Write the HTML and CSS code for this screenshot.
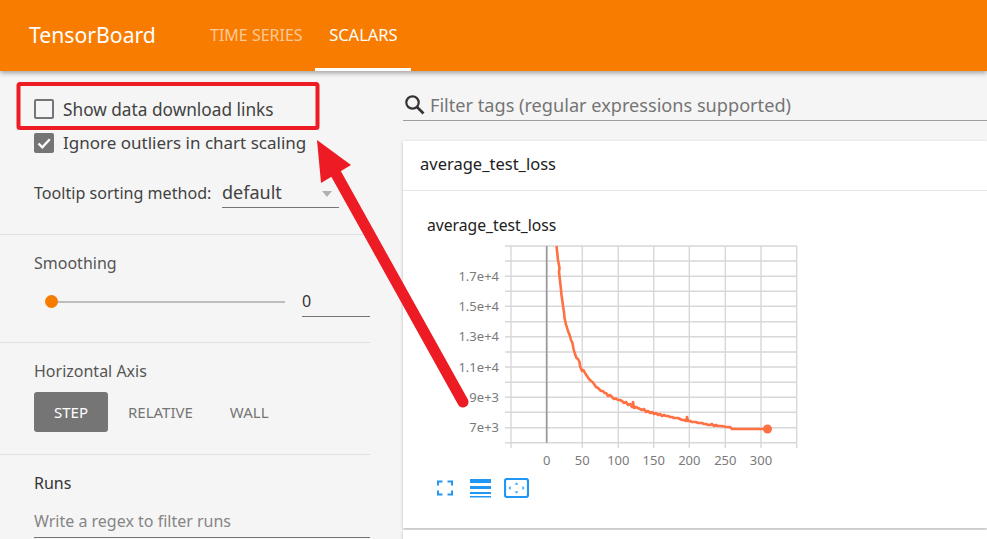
FILE: index.html
```html
<!DOCTYPE html>
<html lang="en">
<head>
<meta charset="utf-8">
<title>TensorBoard</title>
<link rel="stylesheet" href="styles.css">
</head>
<body>
<header class="topbar">
  <div class="brand">TensorBoard</div>
  <nav class="tabs">
    <a class="tab">TIME SERIES</a>
    <a class="tab tab-active">SCALARS</a>
  </nav>
</header>
<main class="layout">
  <aside class="sidebar">
    <section class="group group-options">
      <label class="check-row"><span class="box"></span><span>Show data download links</span></label>
      <label class="check-row check-row-second">
        <span class="box box-on"><svg viewBox="0 0 20 20" width="20" height="20"><path d="M4.500 10.500l3.800 3.800 7.500-8" fill="none" stroke="#fff" stroke-width="2.400"/></svg></span>
        <span>Ignore outliers in chart scaling</span>
      </label>
      <div class="sort-row">
        <span class="sort-label">Tooltip sorting method:</span>
        <div class="select"><span>default</span><i class="caret"></i></div>
      </div>
    </section>
    <section class="group group-smooth">
      <h3 class="group-title">Smoothing</h3>
      <div class="slider-row">
        <div class="slider"><span class="thumb"></span></div>
        <div class="num">0</div>
      </div>
    </section>
    <section class="group group-axis">
      <h3 class="group-title">Horizontal Axis</h3>
      <div class="axis-buttons">
        <button class="axis-btn axis-on">STEP</button>
        <button class="axis-btn axis-rel">RELATIVE</button>
        <button class="axis-btn axis-wall">WALL</button>
      </div>
    </section>
    <section class="group group-runs">
      <h3 class="group-title runs-title">Runs</h3>
      <div class="regex">Write a regex to filter runs</div>
    </section>
  </aside>
  <div class="content">
    <div class="filter">
      <svg class="search" viewBox="0 0 24 24" width="24" height="24"><circle cx="9.500" cy="9.500" r="6.200" fill="none" stroke="#333" stroke-width="2.200"/><path d="M14 14l6.500 6.500" stroke="#333" stroke-width="2.600" fill="none"/></svg>
      <span>Filter tags (regular expressions supported)</span>
    </div>
    <div class="card">
      <div class="card-head">average_test_loss</div>
      <div class="card-body">
        <div class="chart-title">average_test_loss</div>
        <svg class="chart" viewBox="450 240 360 228" width="360" height="228">
          <g class="grid">
            <path d="M505 246H797M505 261H797M505 276.300H797M505 291.300H797M505 306.300H797M505 321.700H797M505 336.700H797M505 352H797M505 367H797M505 382.300H797M505 397.300H797M505 412.300H797M505 427.700H797M505 442.700H797"/>
            <path d="M511 246V448M582.300 246V448M618.300 246V448M653.700 246V448M689.300 246V448M725.300 246V448M761 246V448M796.700 246V448"/>
          </g>
          <path class="zero" d="M546.700 246V442.700"/>
          <g class="ylabels">
            <text x="499" y="281">1.7e+4</text>
            <text x="499" y="311">1.5e+4</text>
            <text x="499" y="341">1.3e+4</text>
            <text x="499" y="371.500">1.1e+4</text>
            <text x="499" y="402">9e+3</text>
            <text x="499" y="432">7e+3</text>
          </g>
          <g class="xlabels">
            <text x="546.700" y="465">0</text>
            <text x="582.300" y="465">50</text>
            <text x="618.300" y="465">100</text>
            <text x="653.700" y="465">150</text>
            <text x="689.300" y="465">200</text>
            <text x="725.300" y="465">250</text>
            <text x="761" y="465">300</text>
          </g>
          <polyline class="curve" points="556.500,246 558,260 559.500,268 559,272 560.500,285 561.500,295 562.500,302 563,306 564,312 564.500,318 565.500,322 566,325 566.500,326 568,331 570,336 571,340 572.500,343 573.500,349 575,354 576.500,358 578,359 579.500,362 580,366 582,371 583.500,370 585,373 587,376 589,379 591,381 592.500,382 594,384 596,387 598,388 600,390 601,391 603,391 604.500,393 606,393 608,396 610,395 612,397 614,399 616,398.500 618,400 620,400 622,401 624,403 626,402 628,405 630,404 632,407 633,402 634,408 636,407 638,408 640,409 642,410 644,409 646,412 648,411 650,413 652,412 654,414 656,413 658,415 660,414 662,416 664,415 666,416 668,416 670,417 672,417 674,418 676,418 678,418 680,419 682,420 684,420 686,421 687,417 688,421 690,421 692,422 694,422 696,422 698,423 700,423 702,423 704,424 706,424 708,425 710,425 712,424 714,426 716,425 718,426 720,426 722,426 724,426.500 726,427 728,427 730,427 732,429 734,429 740,429 750,429 760,429 767,429"/>
          <circle class="dot" cx="767.500" cy="429" r="4.500"/>
        </svg>
        <div class="tools">
          <svg class="tool tool-full" viewBox="0 0 16 16" width="16" height="16"><path d="M1 5.500V1.500H5.500M10.500 1.500H15V5.500M15 10.500V14.500H10.500M5.500 14.500H1V10.500" fill="none" stroke="#2196f3" stroke-width="2"/></svg>
          <svg class="tool tool-list" viewBox="0 0 22 19" width="22" height="19"><path d="M0 0h21v4H0zM0 7h21v3H0zM0 13h21v2H0zM0 17h21v1.500H0z" fill="#2196f3"/></svg>
          <svg class="tool tool-fit" viewBox="0 0 25 20" width="25" height="20"><rect x="1" y="1" width="23" height="18" rx="2" fill="none" stroke="#2196f3" stroke-width="2.200"/><path d="M12.500 4.500l2 2h-4zM12.500 15.500l2-2h-4zM4.500 10l2-2v4zM20.500 10l-2-2v4z" fill="#2196f3"/></svg>
        </div>
      </div>
    </div>
    <div class="card card-next"></div>
  </div>
</main>
<svg class="annotation" viewBox="0 0 987 539" width="987" height="539">
  <rect x="18.500" y="84" width="299" height="44" rx="1.500" fill="none" stroke="#ed1c24" stroke-width="4"/>
  <path d="M463 402L335 172" fill="none" stroke="#ed1c24" stroke-width="11" stroke-linecap="round"/>
  <path d="M317 140L351 165L321 183Z" fill="#ed1c24"/>
</svg>
</body>
</html>
```
FILE: styles.css
```css
* { box-sizing: border-box; }
html, body { margin: 0; height: 539px; overflow: hidden; }
body {
  background: #f5f5f5;
  font-family: "Noto Sans", "Open Sans", sans-serif;
  color: #424242;
}
.topbar {
  height: 71px;
  background: #f87c00;
  display: flex;
  box-shadow: 0 2px 5px rgba(0,0,0,.35);
  position: relative;
  z-index: 2;
  color: #fff;
}
.brand { width: 197px; padding: 20px 0 0 29px; font-size: 21.2px; line-height: 30px; white-space: nowrap; }
.tabs { display: flex; }
.tab {
  font-size: 16px;
  line-height: 20px;
  padding: 25px 12.5px 0 13px;
  color: rgba(255,255,255,.6);
  white-space: nowrap;
}
.tab-active { color: #fff; border-bottom: 3px solid #fff; width: 96px; padding-left: 14px; padding-right: 0; font-size: 16.5px; }
.layout { display: flex; height: 468px; }
.sidebar { width: 370px; flex: none; }
.group { border-bottom: 1px solid #e0e0e0; padding-left: 34px; }
.group-options { height: 164px; padding-top: 28px; }
.check-row { display: flex; align-items: center; gap: 9px; font-size: 17px; line-height: 20px; height: 20px; }
.check-row:first-child { font-size: 17.25px; }
.check-row:first-child span:last-child { padding-top: 2px; }
.check-row-second { margin-top: 14px; }
.box { width: 20px; height: 20px; border: 2px solid #757575; border-radius: 2px; flex: none; }
.box-on { background: #757575; border: 0; display: block; }
.box-on svg { display: block; }
.sort-row { display: flex; margin-top: 27px; align-items: flex-start; }
.sort-label { font-size: 16.1px; line-height: 26px; width: 188px; white-space: nowrap; }
.select { width: 117px; height: 28px; border-bottom: 1px solid #757575; font-size: 18px; line-height: 24px; position: relative; }
.caret { position: absolute; right: 7px; top: 11px; border: 5.5px solid transparent; border-top: 6px solid #b0b0b0; border-bottom: 0; }
.group-smooth { height: 108px; padding-top: 16px; }
.group-title { margin: 0; font-weight: 400; font-size: 16px; line-height: 24px; color: #555; }
.slider-row { display: flex; margin-top: 11px; }
.slider { width: 234px; height: 2px; margin: 15px 0 0 17px; background: #bdbdbd; position: relative; }
.thumb { position: absolute; left: -6px; top: -6px; width: 13px; height: 13px; border-radius: 50%; background: #f57c00; }
.slider-row .num { margin-left: 17px; width: 68px; height: 31px; border-bottom: 1px solid #757575; font-size: 16px; line-height: 31px; color: #333; }
.group-axis { height: 112px; padding-top: 16px; }
.axis-buttons { display: flex; margin-top: 9px; }
.axis-btn { border: 0; background: none; font: inherit; font-size: 15px; color: #757575; height: 40px; padding: 0; border-radius: 3px; }
.axis-on { width: 74px; background: #757575; color: #fff; }
.axis-rel { margin-left: 20px; }
.axis-wall { margin-left: 37px; }
.group-runs { padding-top: 16px; border: 0; padding-left: 34px; }
.runs-title { color: #333; }
.regex { margin-top: 13px; height: 30px; border-bottom: 1px solid #757575; font-size: 16px; line-height: 26px; color: #868686; white-space: nowrap; }
.content { flex: 1; padding: 21px 0 0 33px; min-width: 0; }
.filter { height: 29px; border-bottom: 1px solid #9e9e9e; display: flex; align-items: flex-start; font-size: 18.15px; line-height: 26px; color: #757575; white-space: nowrap; gap: 3px; }
.search { flex: none; margin-top: 1px; }
.card { margin-top: 20px; background: #fff; box-shadow: 0 1px 3px rgba(0,0,0,.25); height: 387px; }
.card-head { height: 50px; padding: 10px 0 0 17px; font-size: 16.5px; line-height: 26px; color: #212121; border-bottom: 1px solid #e4e4e4; }
.card-body { padding: 21px 0 0 24px; }
.chart-title { font-size: 15.7px; line-height: 26px; color: #212121; }
.chart { display: block; margin: 2px 0 0 23px; }
.grid path { fill: none; stroke: #d8d8d8; stroke-width: 1.4; }
.zero { fill: none; stroke: #9a9a9a; stroke-width: 1.8; }
.ylabels text, .xlabels text { font-family: "Noto Sans", sans-serif; font-size: 13px; fill: #7a7a7a; }
.ylabels text { text-anchor: end; }
.xlabels text { text-anchor: middle; }
.curve { fill: none; stroke: #ff7043; stroke-width: 2.6; stroke-linejoin: round; }
.dot { fill: #ff7043; }
.tools { display: flex; align-items: center; margin: 10px 0 0 10px; }
.tool { display: block; flex: none; }
.tool-list { margin-left: 17px; }
.tool-fit { margin-left: 12px; }
.card-next { margin-top: 2px; height: 20px; }
.annotation { position: absolute; left: 0; top: 0; z-index: 3; pointer-events: none; }
```
